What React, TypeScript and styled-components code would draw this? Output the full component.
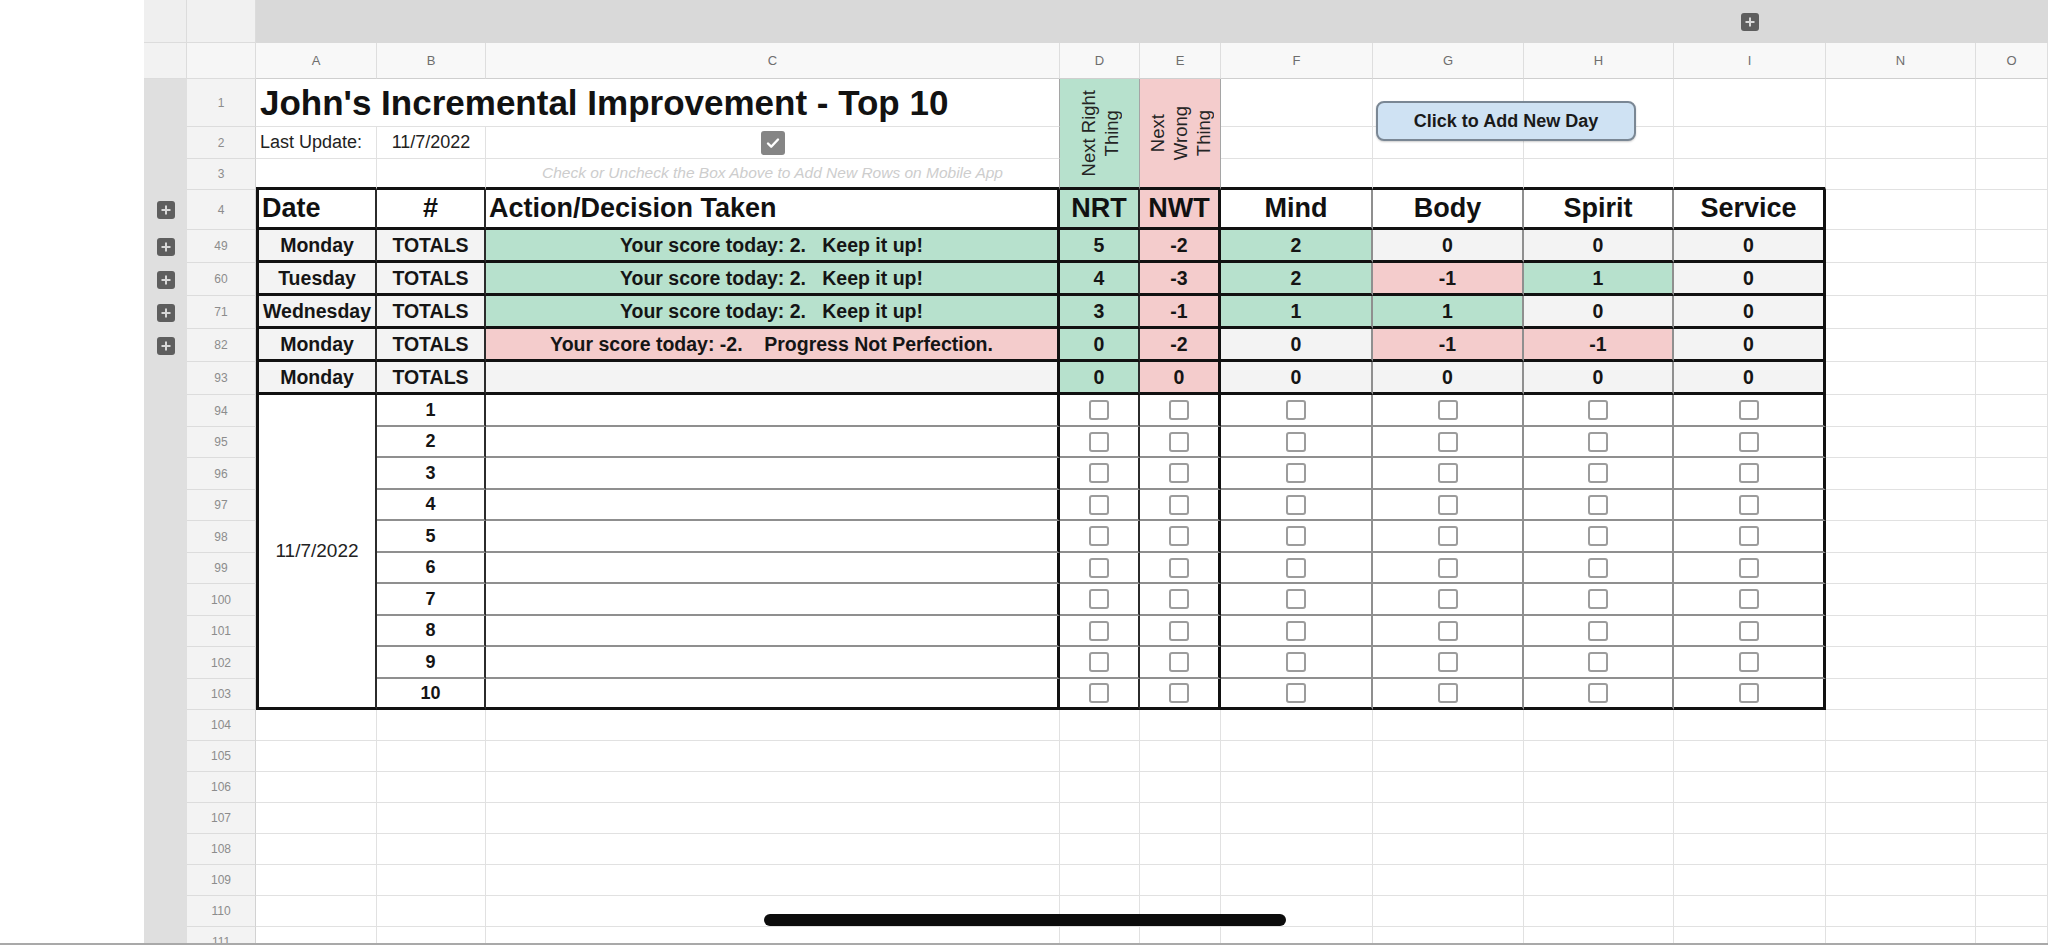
import React from "react";
import styled, { createGlobalStyle } from "styled-components";

const GlobalStyle = createGlobalStyle`
  html, body {
    margin: 0;
    padding: 0;
    background: #fff;
    overflow: hidden;
  }
  body {
    font-family: "Liberation Sans", Arial, sans-serif;
    color: #111;
  }
`;

// border presets
const THICK = "3px solid #111";
const DARK = "2px solid #2b2b2b";
const GRAY = "2px solid #8f8f8f";
const LIGHT = "1px solid #e1e1e1";
const EDGE = "1px solid #a5a5a5";

const GREEN = "#b7e1cd";
const PINK = "#f4cccc";
const SOFT = "#f3f3f3";

const TABLE_COLS = ["A", "B", "C", "D", "E", "F", "G", "H", "I"];
const RIGHT: Record<string, string> = {
  A: DARK, B: DARK, C: THICK, D: DARK, E: THICK, F: GRAY, G: GRAY, H: GRAY, I: THICK,
};

const Page = styled.div`
  position: relative;
  width: 2048px;
  height: 945px;
  padding-left: 144px;
  box-sizing: border-box;
  overflow: hidden;
`;

const Sheet = styled.div`
  position: relative;
  display: grid;
  grid-template-columns: 43px 69px 121px 109px 574px 80px 81px 152px 151px 150px 152px 150px 1fr;
  grid-template-rows:
    43px 36px 48px 32px 31px 40px
    repeat(5, 33.1px) repeat(10, 31.5px) repeat(8, 31px);
`;

const Corner = styled.div<{ $shade: string }>`
  background: ${p => p.$shade};
  border-right: 1px solid #dcdcdc;
  border-bottom: 1px solid #dcdcdc;
  box-sizing: border-box;
`;

const GroupBar = styled.div`
  background: #d9d9d9;
  display: flex;
  align-items: center;
  justify-content: center;
`;

const ColHead = styled.div`
  background: #f8f8f8;
  border-right: 1px solid #dedede;
  border-bottom: 1px solid #cfcfcf;
  box-sizing: border-box;
  display: flex;
  align-items: center;
  justify-content: center;
  font-size: 13px;
  color: #6e6e6e;
`;

const Gutter = styled.div`
  background: #dfdfdf;
  display: flex;
  align-items: center;
  justify-content: center;
`;

const PlusBox = styled.div`
  position: relative;
  width: 18px;
  height: 18px;
  border-radius: 3px;
  background: #5e5e5e;

  &::before,
  &::after {
    content: "";
    position: absolute;
    left: 50%;
    top: 50%;
    background: #d8d8d8;
    transform: translate(-50%, -50%);
  }
  &::before { width: 9px; height: 2px; }
  &::after { width: 2px; height: 9px; }
`;

const RowHead = styled.div`
  background: #f3f3f3;
  border-right: 1px solid #d2d2d2;
  border-bottom: 1px solid #dcdcdc;
  box-sizing: border-box;
  display: flex;
  align-items: center;
  justify-content: center;
  font-size: 12px;
  color: #8c8c8c;
  overflow: hidden;
`;

type Edges = { $r?: string; $b?: string; $l?: string; $bg?: string; $span?: number; $rows?: number };

const Cell = styled.div<Edges>`
  grid-column: span ${p => p.$span ?? 1};
  grid-row: span ${p => p.$rows ?? 1};
  box-sizing: border-box;
  min-width: 0;
  background: ${p => p.$bg ?? "#fff"};
  border-right: ${p => p.$r ?? LIGHT};
  border-bottom: ${p => p.$b ?? LIGHT};
  border-left: ${p => p.$l ?? "none"};
  display: flex;
  align-items: center;
  justify-content: center;
  white-space: pre;
  overflow: hidden;
`;

const TitleCell = styled(Cell)`
  justify-content: flex-start;
  padding-left: 4px;
  font-size: 35px;
  font-weight: 700;
  color: #121212;
`;

const InfoCell = styled(Cell)<{ $left?: boolean }>`
  justify-content: ${p => (p.$left ? "flex-start" : "center")};
  padding-left: ${p => (p.$left ? "4px" : "0")};
  font-size: 18px;
  color: #222;
`;

const NoteCell = styled(Cell)`
  font-size: 15.5px;
  font-style: italic;
  color: #cdcdcd;
`;

const SideCell = styled(Cell)`
  align-items: center;
`;

const SideLabel = styled.span`
  writing-mode: vertical-rl;
  transform: rotate(180deg);
  white-space: pre-line;
  text-align: center;
  font-size: 18.5px;
  line-height: 23px;
  color: #242424;
`;

const HeadCell = styled(Cell)<{ $left?: boolean }>`
  justify-content: ${p => (p.$left ? "flex-start" : "center")};
  padding-left: ${p => (p.$left ? "3px" : "0")};
  font-size: 27px;
  font-weight: 700;
  color: #111;
`;

const TotalCell = styled(Cell)`
  font-size: 19.5px;
  font-weight: 700;
  color: #151515;
`;

const DateCell = styled(Cell)`
  font-size: 19px;
  color: #222;
`;

const NumCell = styled(Cell)`
  font-size: 18px;
  font-weight: 700;
  color: #151515;
`;

const Box = styled.div`
  width: 16px;
  height: 16px;
  border: 2px solid #9c9c9c;
  border-radius: 3px;
  background: #fff;
`;

const CheckedBox = styled.div`
  width: 24px;
  height: 24px;
  border-radius: 3px;
  background: #858585;
  display: flex;
  align-items: center;
  justify-content: center;
`;

const AddDayButton = styled.button`
  position: absolute;
  left: 1232px;
  top: 101px;
  width: 260px;
  height: 40px;
  border: 2px solid #7a8794;
  border-radius: 8px;
  background: #cfe2f3;
  font-family: "Liberation Sans", Arial, sans-serif;
  font-size: 18px;
  font-weight: 700;
  color: #1a1a1a;
  box-shadow: 0 1px 2px rgba(0, 0, 0, 0.2);
  cursor: pointer;
`;

const HomeBar = styled.div`
  position: absolute;
  left: 764px;
  top: 914px;
  width: 522px;
  height: 12px;
  border-radius: 6px;
  background: #0c0c0c;
`;

const ScreenEdge = styled.div`
  position: absolute;
  left: 0;
  right: 0;
  bottom: 0;
  height: 2px;
  background: #a9a9a9;
`;

const tone = (n: number) => (n > 0 ? GREEN : n < 0 ? PINK : SOFT);

type Total = {
  row: number;
  day: string;
  msg: string;
  msgTone: string;
  nrt: number;
  nwt: number;
  mind: number;
  body: number;
  spirit: number;
  service: number;
};

const totals: Total[] = [
  { row: 49, day: "Monday", msg: "Your score today: 2.   Keep it up!", msgTone: GREEN, nrt: 5, nwt: -2, mind: 2, body: 0, spirit: 0, service: 0 },
  { row: 60, day: "Tuesday", msg: "Your score today: 2.   Keep it up!", msgTone: GREEN, nrt: 4, nwt: -3, mind: 2, body: -1, spirit: 1, service: 0 },
  { row: 71, day: "Wednesday", msg: "Your score today: 2.   Keep it up!", msgTone: GREEN, nrt: 3, nwt: -1, mind: 1, body: 1, spirit: 0, service: 0 },
  { row: 82, day: "Monday", msg: "Your score today: -2.    Progress Not Perfection.", msgTone: PINK, nrt: 0, nwt: -2, mind: 0, body: -1, spirit: -1, service: 0 },
  { row: 93, day: "Monday", msg: "", msgTone: SOFT, nrt: 0, nwt: 0, mind: 0, body: 0, spirit: 0, service: 0 },
];

const CheckMark = () => (
  <svg width="16" height="16" viewBox="0 0 16 16">
    <path d="M3 8.5l3.2 3.2L13 4.5" fill="none" stroke="#fff" strokeWidth="2.4" strokeLinecap="round" strokeLinejoin="round" />
  </svg>
);

function Lead({ n, plus }: { n: number; plus?: boolean }) {
  return (
    <>
      <Gutter>{plus && <PlusBox />}</Gutter>
      <RowHead>{n}</RowHead>
    </>
  );
}

function Spare() {
  return (
    <>
      <Cell />
      <Cell />
    </>
  );
}

export default function App() {
  const letters = ["A", "B", "C", "D", "E", "F", "G", "H", "I", "N", "O"];

  return (
    <Page>
      <GlobalStyle />
      <Sheet>
        {/* group bar */}
        <Corner $shade="#efefef" />
        <Corner $shade="#f1f1f1" />
        {letters.map(l => (
          <GroupBar key={"g" + l}>{l === "I" && <PlusBox />}</GroupBar>
        ))}

        {/* column letters */}
        <Corner $shade="#f2f2f2" />
        <Corner $shade="#f6f6f6" />
        {letters.map(l => (
          <ColHead key={"c" + l}>{l}</ColHead>
        ))}

        {/* row 1 */}
        <Lead n={1} />
        <TitleCell $span={3} $r={EDGE}>John's Incremental Improvement - Top 10</TitleCell>
        <SideCell $rows={3} $bg={GREEN} $r={EDGE} $b={THICK}>
          <SideLabel>{"Next Right\nThing"}</SideLabel>
        </SideCell>
        <SideCell $rows={3} $bg={PINK} $r={EDGE} $b={THICK}>
          <SideLabel>{"Next\nWrong\nThing"}</SideLabel>
        </SideCell>
        {["F", "G", "H", "I", "N", "O"].map(c => <Cell key={"r1" + c} />)}

        {/* row 2 */}
        <Lead n={2} />
        <InfoCell $left>Last Update:</InfoCell>
        <InfoCell>11/7/2022</InfoCell>
        <Cell $r={EDGE}>
          <CheckedBox>
            <CheckMark />
          </CheckedBox>
        </Cell>
        {["F", "G", "H", "I", "N", "O"].map(c => <Cell key={"r2" + c} />)}

        {/* row 3 */}
        <Lead n={3} />
        <Cell $b={THICK} />
        <Cell $b={THICK} />
        <NoteCell $b={THICK} $r={EDGE}>Check or Uncheck the Box Above to Add New Rows on Mobile App</NoteCell>
        {["F", "G", "H", "I"].map(c => <Cell key={"r3" + c} $b={THICK} />)}
        <Spare />

        {/* row 4 headers */}
        <Lead n={4} plus />
        <HeadCell $left $l={THICK} $r={RIGHT.A} $b={THICK}>Date</HeadCell>
        <HeadCell $r={RIGHT.B} $b={THICK}>#</HeadCell>
        <HeadCell $left $r={RIGHT.C} $b={THICK}>Action/Decision Taken</HeadCell>
        <HeadCell $bg={GREEN} $r={RIGHT.D} $b={THICK}>NRT</HeadCell>
        <HeadCell $bg={PINK} $r={RIGHT.E} $b={THICK}>NWT</HeadCell>
        <HeadCell $r={RIGHT.F} $b={THICK}>Mind</HeadCell>
        <HeadCell $r={RIGHT.G} $b={THICK}>Body</HeadCell>
        <HeadCell $r={RIGHT.H} $b={THICK}>Spirit</HeadCell>
        <HeadCell $r={RIGHT.I} $b={THICK}>Service</HeadCell>
        <Spare />

        {/* daily totals */}
        {totals.map(t => (
          <React.Fragment key={t.row}>
            <Lead n={t.row} plus={t.row !== 93} />
            <TotalCell $l={THICK} $r={RIGHT.A} $b={THICK} $bg={SOFT}>{t.day}</TotalCell>
            <TotalCell $r={RIGHT.B} $b={THICK} $bg={SOFT}>TOTALS</TotalCell>
            <TotalCell $r={RIGHT.C} $b={THICK} $bg={t.msgTone}>{t.msg}</TotalCell>
            <TotalCell $r={RIGHT.D} $b={THICK} $bg={GREEN}>{t.nrt}</TotalCell>
            <TotalCell $r={RIGHT.E} $b={THICK} $bg={PINK}>{t.nwt}</TotalCell>
            <TotalCell $r={RIGHT.F} $b={THICK} $bg={tone(t.mind)}>{t.mind}</TotalCell>
            <TotalCell $r={RIGHT.G} $b={THICK} $bg={tone(t.body)}>{t.body}</TotalCell>
            <TotalCell $r={RIGHT.H} $b={THICK} $bg={tone(t.spirit)}>{t.spirit}</TotalCell>
            <TotalCell $r={RIGHT.I} $b={THICK} $bg={tone(t.service)}>{t.service}</TotalCell>
            <Spare />
          </React.Fragment>
        ))}

        {/* top 10 entries */}
        {Array.from({ length: 10 }, (_, i) => {
          const bottom = i === 9 ? THICK : GRAY;
          return (
            <React.Fragment key={"d" + i}>
              <Lead n={94 + i} />
              {i === 0 && (
                <DateCell $rows={10} $l={THICK} $r={RIGHT.A} $b={THICK}>11/7/2022</DateCell>
              )}
              <NumCell $r={RIGHT.B} $b={bottom}>{i + 1}</NumCell>
              <Cell $r={RIGHT.C} $b={bottom} />
              {TABLE_COLS.slice(3).map(c => (
                <Cell key={c} $r={RIGHT[c]} $b={bottom}>
                  <Box />
                </Cell>
              ))}
              <Spare />
            </React.Fragment>
          );
        })}

        {/* empty rows */}
        {Array.from({ length: 8 }, (_, i) => (
          <React.Fragment key={"e" + i}>
            <Lead n={104 + i} />
            {letters.map(l => <Cell key={l} />)}
          </React.Fragment>
        ))}

        <AddDayButton>Click to Add New Day</AddDayButton>
      </Sheet>
      <HomeBar />
      <ScreenEdge />
    </Page>
  );
}
